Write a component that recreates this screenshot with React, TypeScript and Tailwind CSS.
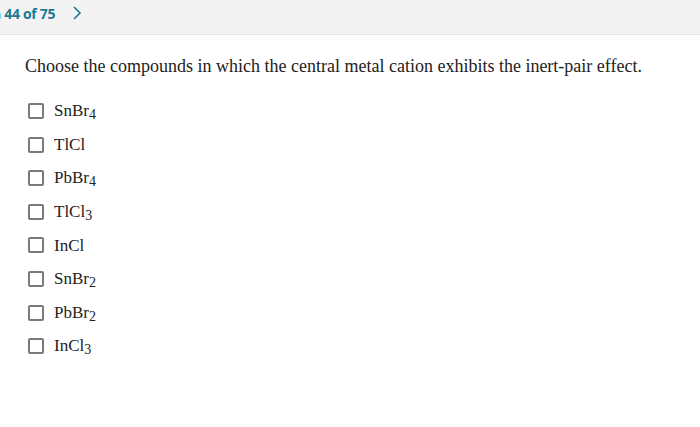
import React from 'react';

const options: { base: string; sub?: string }[] = [
  { base: 'SnBr', sub: '4' },
  { base: 'TlCl' },
  { base: 'PbBr', sub: '4' },
  { base: 'TlCl', sub: '3' },
  { base: 'InCl' },
  { base: 'SnBr', sub: '2' },
  { base: 'PbBr', sub: '2' },
  { base: 'InCl', sub: '3' },
];

export default function App() {
  return (
    <div className="w-[700px] h-[427px] bg-white overflow-hidden">
      <div className="h-[35px] bg-[#f3f3f3] border-b border-[#e6e6e6] flex items-start pt-[3px] -ml-[8px] gap-[17px]">
        <span className="font-['Open_Sans',sans-serif] font-bold text-[14px] text-[#1a7a95] tracking-[-0.3px]">n 44 of 75</span>
        <svg width="10" height="16" viewBox="0 0 10 16" className="mt-[2px]">
          <path d="M2 2 L8 8 L2 14" fill="none" stroke="#1a7a95" strokeWidth="1.6" />
        </svg>
      </div>
      <div className="px-[25px] pt-[19px] font-['Liberation_Serif',serif] text-[#222]">
        <p className="text-[18px] leading-[24px]">
          Choose the compounds in which the central metal cation exhibits the inert-pair effect.
        </p>
        <div className="mt-[23px] flex flex-col gap-[13.6px] pl-[3px]">
          {options.map((o, i) => (
            <label key={i} className="flex items-center gap-[10px] h-[20px]">
              <span className="w-[16px] h-[16px] border-2 border-[#7a7a7a] rounded-[2px]" />
              <span className="text-[17px]">
                {o.base}
                {o.sub && <sub className="text-[14px] bottom-[-3px]">{o.sub}</sub>}
              </span>
            </label>
          ))}
        </div>
      </div>
    </div>
  );
}
